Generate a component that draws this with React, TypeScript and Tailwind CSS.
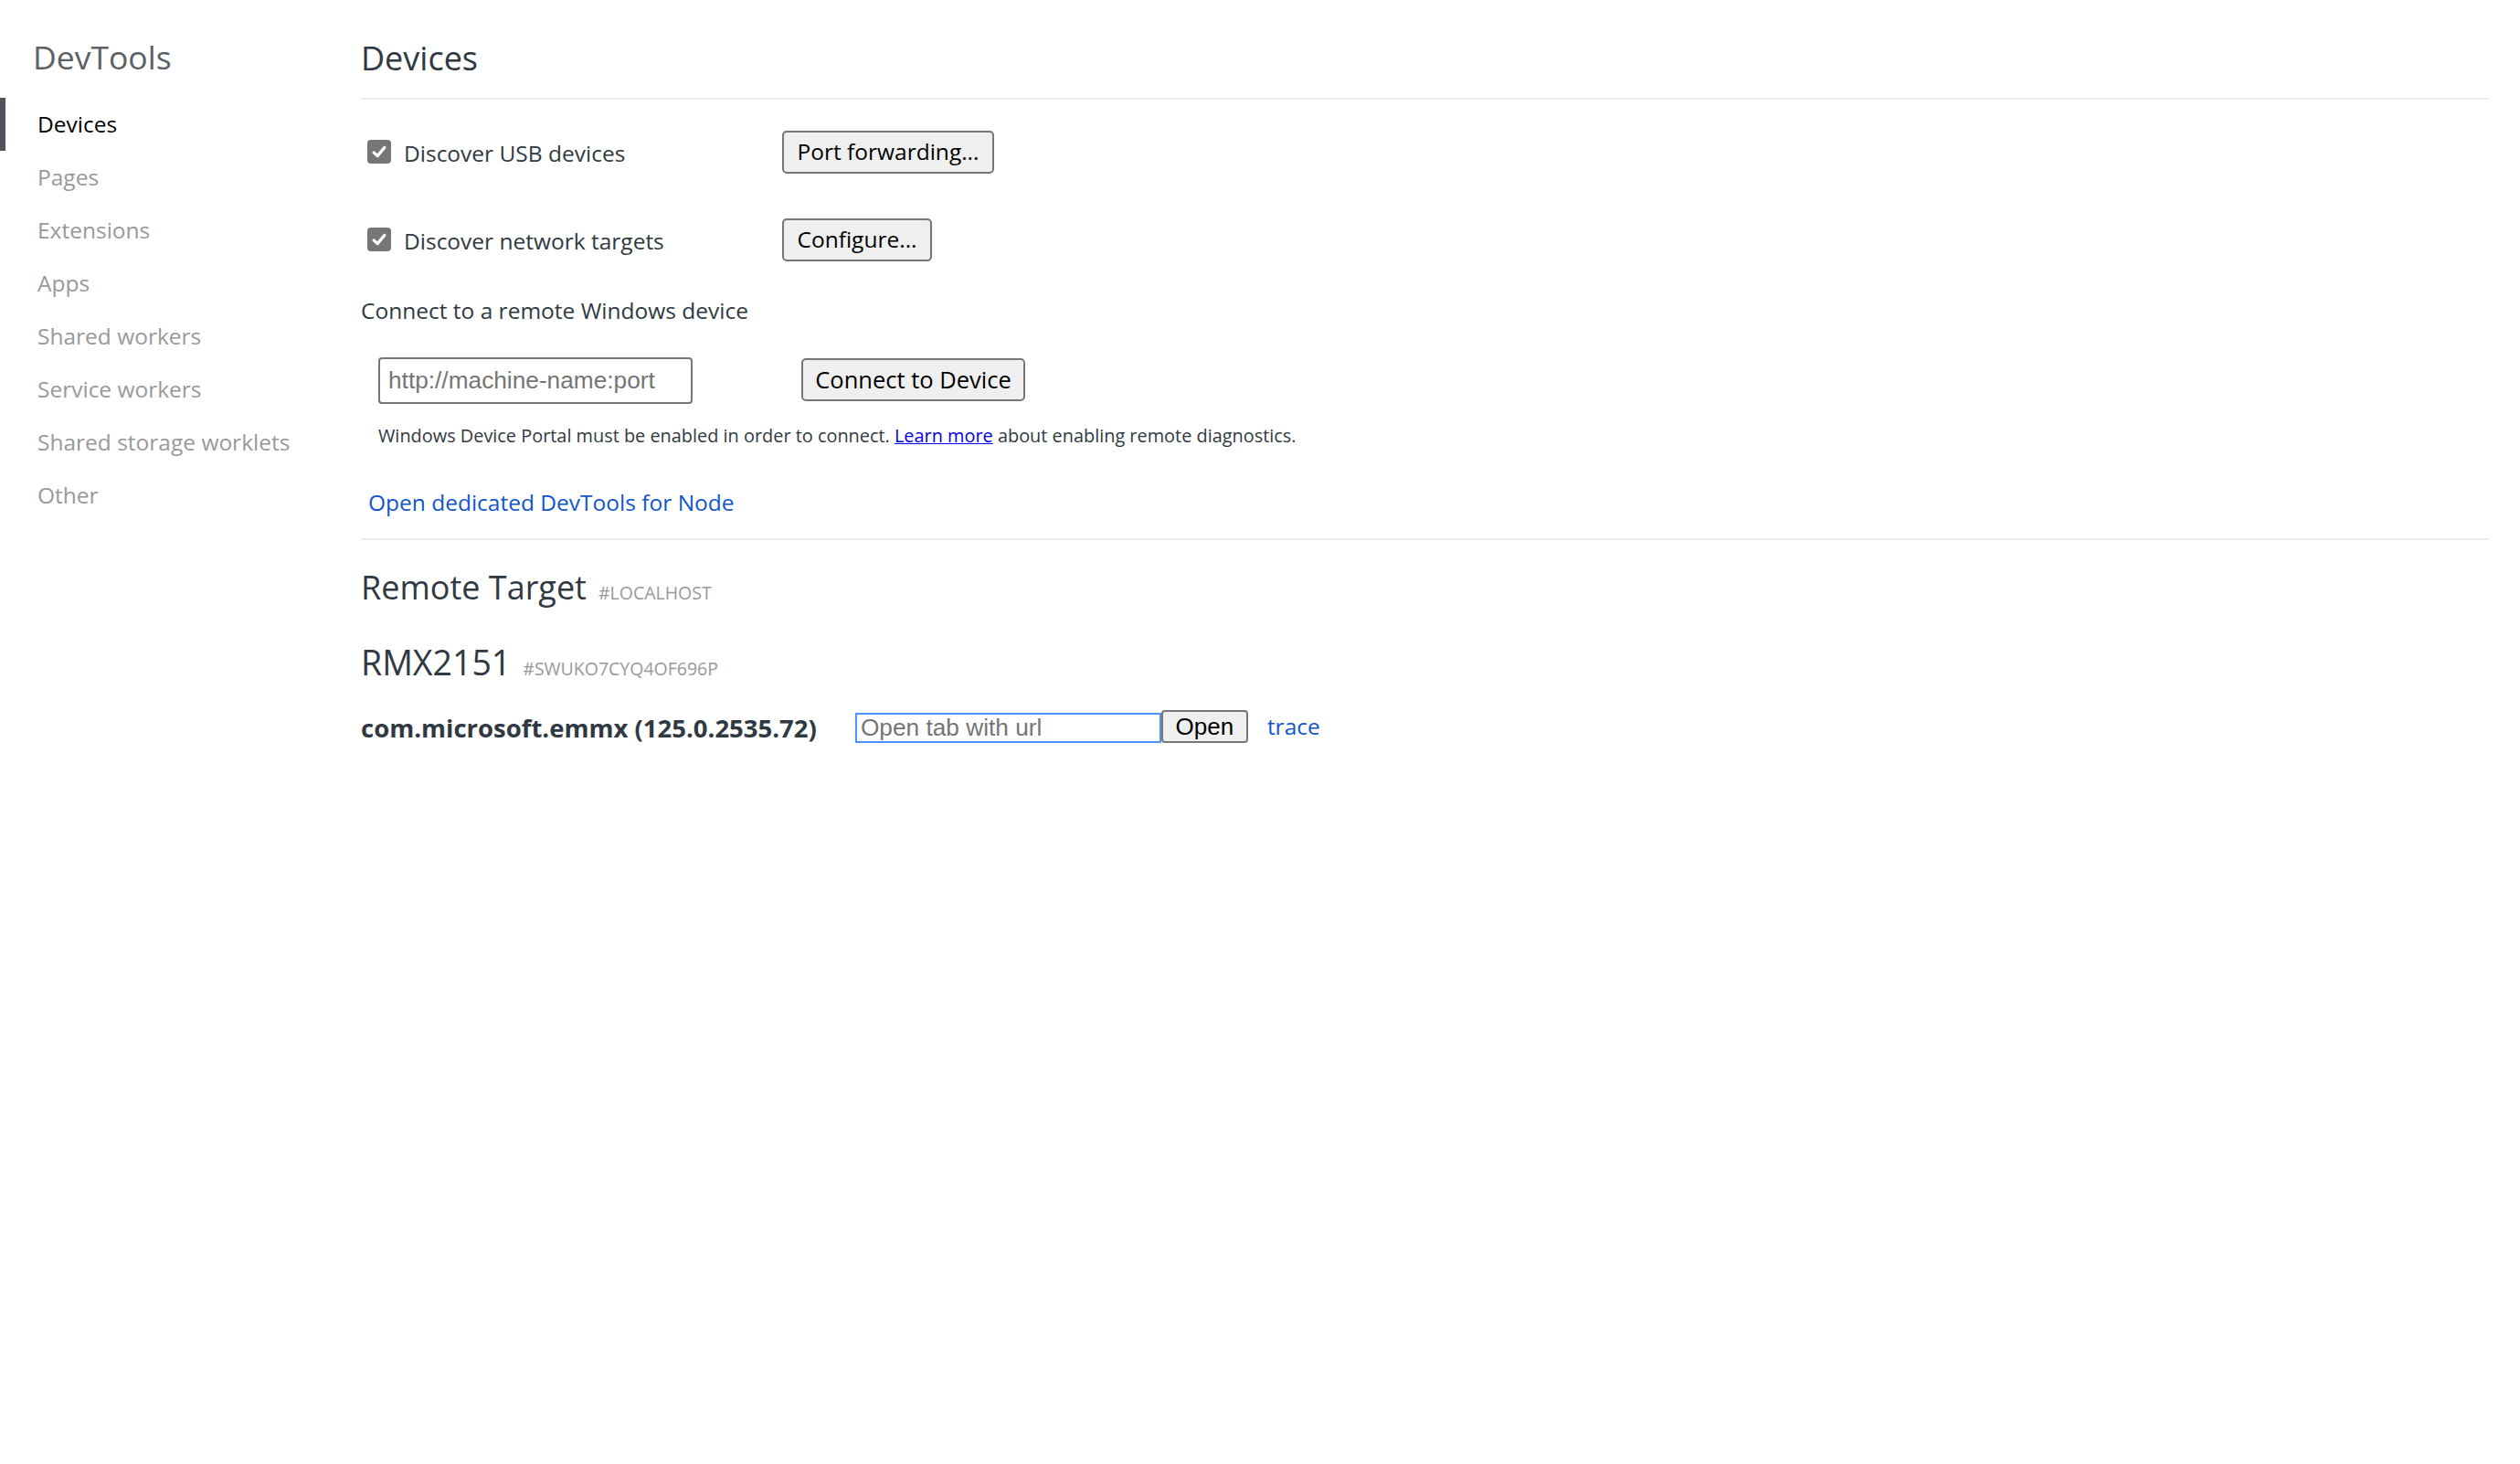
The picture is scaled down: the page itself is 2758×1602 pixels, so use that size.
import { useState } from 'react';

const navItems = [
    'Devices',
    'Pages',
    'Extensions',
    'Apps',
    'Shared workers',
    'Service workers',
    'Shared storage worklets',
    'Other',
];

function CheckBox({ checked, onToggle }: { checked: boolean; onToggle: () => void }) {
    return (
        <span
            onClick={onToggle}
            className={
                checked
                    ? 'w-[26px] h-[26px] rounded-[4px] bg-[#767676] flex items-center justify-center shrink-0'
                    : 'w-[26px] h-[26px] rounded-[4px] border-2 border-[#767676] bg-white shrink-0'
            }
        >
            {checked && (
                <svg viewBox="0 0 16 16" className="w-[20px] h-[20px]">
                    <path
                        d="M3.3 8.7 L6.5 11.7 L12.7 4.3"
                        fill="none"
                        stroke="white"
                        strokeWidth="2.6"
                        strokeLinecap="round"
                        strokeLinejoin="round"
                    />
                </svg>
            )}
        </span>
    );
}

export default function App() {
    const [usb, setUsb] = useState(true);
    const [network, setNetwork] = useState(true);

    return (
        <div className="min-h-screen flex bg-white text-[#303942] font-['Open_Sans',sans-serif]">
            {/* Sidebar */}
            <aside className="w-[395px] shrink-0">
                <div className="h-[107px] pt-[37px] pl-[36px] text-[35.5px] leading-[50px] text-[#5c6166]">DevTools</div>
                <ul>
                    {navItems.map((item, i) => (
                        <li
                            key={item}
                            className={
                                i === 0
                                    ? 'h-[58px] flex items-center pl-[35px] border-l-[6px] border-[#4f545a] text-[24.5px] text-black'
                                    : 'h-[58px] flex items-center pl-[35px] border-l-[6px] border-transparent text-[24.5px] text-[#999999]'
                            }
                        >
                            {item}
                        </li>
                    ))}
                </ul>
            </aside>

            {/* Content */}
            <main className="flex-1 pr-[34px]">
                <div className="h-[109px] pt-[39px] border-b-2 border-[#ececec]">
                    <h1 className="text-[36px] leading-[50px]">Devices</h1>
                </div>

                <div className="border-b-2 border-[#ececec] pb-[22px]">
                    <div className="mt-[33px] h-[48px] flex items-center">
                        <label className="w-[461px] flex items-center">
                            <span className="ml-[7px]">
                                <CheckBox checked={usb} onToggle={() => setUsb(!usb)} />
                            </span>
                            <span className="ml-[14px] pt-[3px] text-[24.5px] leading-[34px]">Discover USB devices</span>
                        </label>
                        <button className="w-[232px] h-[47px] rounded-[5px] border-2 border-[#767676] bg-[#efefef] text-[24.5px] leading-none text-black">
                            Port forwarding...
                        </button>
                    </div>

                    <div className="mt-[48px] h-[48px] flex items-center">
                        <label className="w-[461px] flex items-center">
                            <span className="ml-[7px]">
                                <CheckBox checked={network} onToggle={() => setNetwork(!network)} />
                            </span>
                            <span className="ml-[14px] pt-[3px] text-[24.5px] leading-[34px]">Discover network targets</span>
                        </label>
                        <button className="w-[164px] h-[47px] rounded-[5px] border-2 border-[#767676] bg-[#efefef] text-[24.5px] leading-none text-black">
                            Configure...
                        </button>
                    </div>

                    <div className="mt-[37px] text-[24.5px] leading-[34px]">Connect to a remote Windows device</div>

                    <div className="mt-[33px] pl-[19px] flex items-start">
                        <input
                            placeholder="http://machine-name:port"
                            className="mt-[1px] w-[344px] h-[51px] rounded-[4px] border-2 border-[#767676] px-[9px] bg-white text-[26.25px] font-['Liberation_Sans',Arial,sans-serif] text-black placeholder:text-[#757575] outline-none"
                        />
                        <button className="mt-[2px] ml-[119px] w-[245px] h-[47px] rounded-[5px] border-2 border-[#767676] bg-[#efefef] text-[25.5px] leading-none text-black">
                            Connect to Device
                        </button>
                    </div>

                    <p className="mt-[21px] pl-[19px] text-[19.9px] leading-[28px]">
                        Windows Device Portal must be enabled in order to connect.{' '}
                        <a href="#" className="text-[#0000ee] underline">Learn more</a> about enabling remote diagnostics.
                    </p>

                    <div className="mt-[42px] pl-[8px] text-[24.5px] leading-[34px]">
                        <a href="#" className="text-[#1155cc]">Open dedicated DevTools for Node</a>
                    </div>
                </div>

                <h2 className="mt-[27px] text-[36px] leading-[50px]">
                    Remote Target
                    <span className="ml-[13px] text-[19.5px] text-[#999999]">#LOCALHOST</span>
                </h2>

                <h3 className="mt-[26px] text-[37.5px] leading-[50px]">
                    RMX2151
                    <span className="ml-[13px] text-[19.5px] text-[#999999]">#SWUKO7CYQ4OF696P</span>
                </h3>

                <div className="mt-[20px] h-[36px] flex items-end">
                    <div className="h-[36px] pt-[4px] text-[27.5px] leading-[32px] font-bold">com.microsoft.emmx (125.0.2535.72)</div>
                    <input
                        placeholder="Open tab with url"
                        className="ml-[42px] w-[335px] h-[33px] border-2 border-[#4d90fe] px-[4px] bg-white text-[26.25px] leading-none font-['Liberation_Sans',Arial,sans-serif] text-black placeholder:text-[#757575] outline-none"
                    />
                    <button className="w-[95px] h-[36px] rounded-[4px] border-2 border-[#767676] bg-[#efefef] text-[26px] leading-none font-['Liberation_Sans',Arial,sans-serif] text-black">
                        Open
                    </button>
                    <a href="#" className="ml-[21px] h-[36px] text-[24.5px] leading-[36px] text-[#1155cc]">trace</a>
                </div>
            </main>
        </div>
    );
}
